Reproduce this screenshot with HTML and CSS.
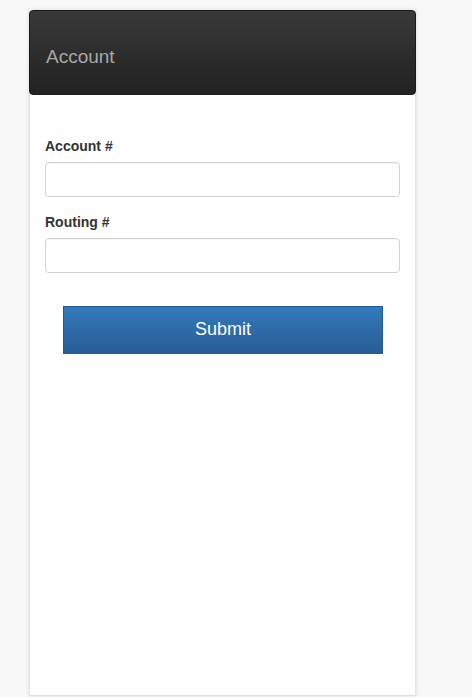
FILE: index.html
```html
<!DOCTYPE html>
<html>
<head>
<meta charset="utf-8">
<link rel="stylesheet" href="styles.css">
</head>
<body>
<div class="page">
  <div class="card">
    <div class="card-header">Account</div>
    <form class="card-body">
      <label class="field-label" for="acct">Account #</label>
      <input class="field-input" id="acct" type="text">
      <label class="field-label" for="routing">Routing #</label>
      <input class="field-input" id="routing" type="text">
      <div class="actions">
        <button class="submit" type="button">Submit</button>
      </div>
    </form>
  </div>
</div>
</body>
</html>
```
FILE: styles.css
```css
html, body {
  margin: 0;
  padding: 0;
  background: #ffffff;
}
body {
  font-family: "Liberation Sans", Arial, sans-serif;
}
.page {
  width: 472px;
  height: 697px;
  background: #f8f8f8;
  padding-top: 10px;
  box-sizing: border-box;
}
.card {
  margin-left: 29px;
  width: 387px;
  height: 686px;
  background: #ffffff;
  box-shadow: 0 0 4px rgba(0,0,0,0.12);
  border-right: 1px solid #e6e6e6;
  border-left: 1px solid #e6e6e6;
  border-bottom: 1px solid #e0e0e0;
  box-sizing: border-box;
  display: flex;
  flex-direction: column;
}
.card-header {
  height: 85px;
  margin: 0 -1px;
  background: linear-gradient(#393939, #222222);
  border: 1px solid #1a1a1a;
  border-radius: 4px;
  color: #a8a8a8;
  font-size: 19px;
  padding: 8px 0 0 16px;
  display: flex;
  align-items: center;
  box-sizing: border-box;
}
.card-body {
  display: flex;
  flex-direction: column;
  padding: 43px 15px 0 15px;
  margin: 0;
}
.field-label {
  font-weight: bold;
  font-size: 14px;
  color: #333333;
  line-height: 16px;
  margin-bottom: 8px;
}
.field-input {
  height: 35px;
  border: 1px solid #d2d2d2;
  border-radius: 4px;
  box-sizing: border-box;
  margin: 0 0 17px 0;
  box-shadow: inset 0 1px 1px rgba(0,0,0,0.04);
}
.actions {
  display: flex;
  justify-content: center;
  padding-top: 16px;
  padding-left: 1px;
}
.submit {
  width: 320px;
  height: 48px;
  background: linear-gradient(#3379bb, #285d96);
  border: 1px solid #245891;
  color: #ffffff;
  font-family: "Liberation Sans", Arial, sans-serif;
  font-size: 18px;
  padding: 0 0 2px 0;
}
```
